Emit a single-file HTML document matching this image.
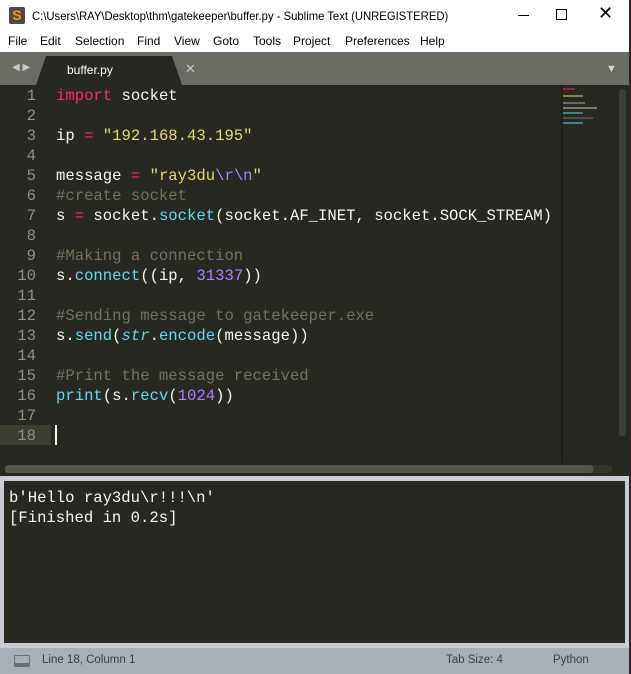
<!DOCTYPE html>
<html><head><meta charset="utf-8"><style>
*{margin:0;padding:0;box-sizing:border-box}
body{width:631px;height:674px;overflow:hidden;background:#3a1f2a;font-family:"Liberation Sans",sans-serif;position:relative}
.win{position:absolute;left:0;top:0;width:629px;height:674px;background:#272822}
.title{position:absolute;left:0;top:0;width:629px;height:31px;background:#fff;font-size:12px;color:#000}
.menu{position:absolute;left:0;top:31px;width:629px;height:21px;background:#fff;font-size:12px;color:#000}
.menu span{position:absolute;top:3px}
.tabs{position:absolute;left:0;top:52px;width:629px;height:33px;background:#6b6b64}
.code{position:absolute;left:0;top:86px;font-family:"Liberation Mono",monospace;font-size:15.6px;color:#f8f8f2}
.ln{position:absolute;left:0;width:36px;text-align:right;color:#90908a}
.tx{position:absolute;left:56px;white-space:pre}
.k{color:#f92672}.s{color:#e6db74}.c{color:#75715e}.f{color:#66d9ef}.n{color:#ae81ff}.i{color:#66d9ef;font-style:italic}
.out{position:absolute;left:0;top:476px;width:629px;height:172px;background:#c9cdd3}
.outin{position:absolute;left:4px;top:5px;width:621px;height:162px;background:#272822;font-family:"Liberation Mono",monospace;font-size:15.6px;color:#f8f8f2;padding:7px 0 0 5px;line-height:20px;white-space:pre}
.status{position:absolute;left:0;top:648px;width:629px;height:26px;background:#a8afb7;font-size:11.5px;color:#3d4148}
</style></head><body><div class="win">
<div class="title">
<div style="position:absolute;left:9px;top:7px;width:16px;height:17px;background:#4a4a4a;border-radius:2px"><div style="color:#ff9800;font-weight:bold;font-size:14px;text-align:center;line-height:17px">S</div></div>
<div style="position:absolute;left:32px;top:9px;transform:scaleX(0.94);transform-origin:0 0;white-space:nowrap">C:\Users\RAY\Desktop\thm\gatekeeper\buffer.py - Sublime Text (UNREGISTERED)</div>
<div style="position:absolute;left:518px;top:15px;width:11px;height:1px;background:#000"></div>
<div style="position:absolute;left:556px;top:9px;width:11px;height:11px;border:1px solid #000"></div>
<div style="position:absolute;left:598px;top:3px;font-size:18px">✕</div>
</div>
<div class="menu"><span style="left:8px">File</span><span style="left:40px">Edit</span><span style="left:75px">Selection</span><span style="left:137px">Find</span><span style="left:174px">View</span><span style="left:213px">Goto</span><span style="left:253px">Tools</span><span style="left:293px">Project</span><span style="left:345px">Preferences</span><span style="left:420px">Help</span></div>
<div class="tabs">
<div style="position:absolute;left:12px;top:10px;color:#c8c8c8;font-size:10px">◀ ▶</div>
<svg style="position:absolute;left:36px;top:4px" width="146" height="29"><path d="M0 29 L10 0 L136 0 L146 29Z" fill="#272822"/></svg>
<div style="position:absolute;left:67px;top:11px;font-size:12px;color:#fff">buffer.py</div>
<div style="position:absolute;left:185px;top:9px;font-size:13px;color:#c8c8c8">✕</div>
<div style="position:absolute;left:606px;top:11px;color:#d8d8d8;font-size:11px">▼</div>
</div>
<div style="position:absolute;left:0;top:425px;width:51px;height:20px;background:#3e3d32"></div>
<div style="position:absolute;left:55px;top:425px;width:2px;height:20px;background:#f8f8f0"></div>
<div class="code">
<div class="ln" style="top:1px">1</div><div class="tx" style="top:1px"><span class="k">import</span> socket</div>
<div class="ln" style="top:21px">2</div>
<div class="ln" style="top:41px">3</div><div class="tx" style="top:41px">ip <span class="k">=</span> <span class="s">"192.168.43.195"</span></div>
<div class="ln" style="top:61px">4</div>
<div class="ln" style="top:81px">5</div><div class="tx" style="top:81px">message <span class="k">=</span> <span class="s">"ray3du<span class="n">\r\n</span>"</span></div>
<div class="ln" style="top:101px">6</div><div class="tx c" style="top:101px">#create socket</div>
<div class="ln" style="top:121px">7</div><div class="tx" style="top:121px">s <span class="k">=</span> socket.<span class="f">socket</span>(socket.AF_INET, socket.SOCK_STREAM)</div>
<div class="ln" style="top:141px">8</div>
<div class="ln" style="top:161px">9</div><div class="tx c" style="top:161px">#Making a connection</div>
<div class="ln" style="top:181px">10</div><div class="tx" style="top:181px">s.<span class="f">connect</span>((ip, <span class="n">31337</span>))</div>
<div class="ln" style="top:201px">11</div>
<div class="ln" style="top:221px">12</div><div class="tx c" style="top:221px">#Sending message to gatekeeper.exe</div>
<div class="ln" style="top:241px">13</div><div class="tx" style="top:241px">s.<span class="f">send</span>(<span class="i">str</span>.<span class="f">encode</span>(message))</div>
<div class="ln" style="top:261px">14</div>
<div class="ln" style="top:281px">15</div><div class="tx c" style="top:281px">#Print the message received</div>
<div class="ln" style="top:301px">16</div><div class="tx" style="top:301px"><span class="f">print</span>(s.<span class="f">recv</span>(<span class="n">1024</span>))</div>
<div class="ln" style="top:321px">17</div>
<div class="ln" style="top:341px">18</div>
</div>
<div style="position:absolute;left:561px;top:85px;width:2px;height:377px;background:#1e1f1a"></div>
<div style="position:absolute;left:563px;top:86px;width:34px;height:40px;opacity:.5">
<div style="height:2px;width:12px;background:#f92672;margin:2px 0"></div><div style="height:2px;width:20px;background:#e6db74;margin:5px 0"></div><div style="height:2px;width:22px;background:#aaa;margin:3px 0"></div><div style="height:2px;width:34px;background:#ccc;margin:1px 0"></div><div style="height:2px;width:20px;background:#66d9ef;margin:3px 0"></div><div style="height:2px;width:30px;background:#777;margin:3px 0"></div><div style="height:2px;width:20px;background:#66d9ef;margin:3px 0"></div></div>
<div style="position:absolute;left:619px;top:89px;width:7px;height:347px;background:#3b3c36;border-radius:3px"></div>
<div style="position:absolute;left:5px;top:465px;width:607px;height:8px;background:#33342e;border-radius:3px"></div>
<div style="position:absolute;left:5px;top:465px;width:588px;height:8px;background:#54554f;border-radius:3px"></div>
<div class="out"><div class="outin">b'Hello ray3du\r!!!\n'
[Finished in 0.2s]</div></div>
<div class="status">
<div style="position:absolute;left:14px;top:7px;width:16px;height:12px;border:1px solid #6a6f76;border-bottom:4px solid #6a6f76;border-radius:1px"></div>
<div style="position:absolute;left:42px;top:6px">Line 18, Column 1</div>
<div style="position:absolute;left:446px;top:6px">Tab Size: 4</div>
<div style="position:absolute;left:553px;top:6px">Python</div>
</div>
</div></body></html>
